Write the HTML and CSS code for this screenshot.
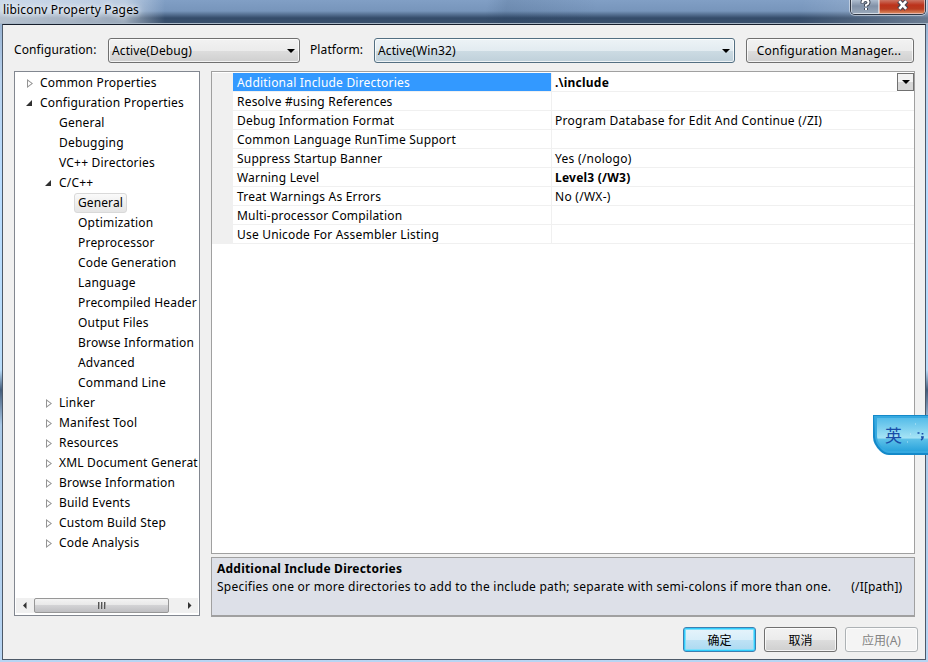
FILE: index.html
```html
<!DOCTYPE html>
<html lang="en">
<head>
    <meta charset="utf-8">
    <title>libiconv Property Pages</title>
    <link rel="stylesheet" href="styles.css">
</head>
<body>
    <div class="window">
        <div class="titlebar">
            <span class="title">libiconv Property Pages</span>
            <div class="caption">
                <span class="cap help"><svg width="28" height="14" viewBox="0 0 28 14"><path d="M11.5 3.5V2.5Q11.5 0 14.5 0Q17.5 0 17.5 2.5Q17.5 4 15 5.200V6.5M15 8V10" fill="none" stroke="#444b58" stroke-width="4"/><path d="M11.5 3V2.5Q11.5 0 14.5 0Q17.5 0 17.5 2.5Q17.5 4 15 5.200V6.5M15 8V10" fill="none" stroke="#fff" stroke-width="2"/></svg></span>
                <span class="cap close"><svg width="48" height="14" viewBox="0 0 48 14"><path d="M20 1L27.5 9M27.5 1L20 9" fill="none" stroke="#4b4450" stroke-width="5"/><path d="M20.3 1.2L27.2 8.8M27.2 1.2L20.3 8.8" fill="none" stroke="#fff" stroke-width="2.6"/></svg></span>
            </div>
        </div>
        <div class="client">
            <div class="toolbar">
                <span class="label">Configuration:</span>
                <div class="combo config"><span>Active(Debug)</span><i class="arrow"></i></div>
                <span class="label platform-label">Platform:</span>
                <div class="combo platform"><span>Active(Win32)</span><i class="arrow"></i></div>
                <div class="button manager">Configuration Manager...</div>
            </div>
            <div class="main">
                <div class="tree">
                    <ul class="nodes">
                        <li class="l1 closed">Common Properties</li>
                        <li class="l1 open">Configuration Properties</li>
                        <li class="l2">General</li>
                        <li class="l2">Debugging</li>
                        <li class="l2">VC++ Directories</li>
                        <li class="l2 open">C/C++</li>
                        <li class="l3"><span class="current">General</span></li>
                        <li class="l3">Optimization</li>
                        <li class="l3">Preprocessor</li>
                        <li class="l3">Code Generation</li>
                        <li class="l3">Language</li>
                        <li class="l3">Precompiled Header</li>
                        <li class="l3">Output Files</li>
                        <li class="l3">Browse Information</li>
                        <li class="l3">Advanced</li>
                        <li class="l3">Command Line</li>
                        <li class="l2 closed">Linker</li>
                        <li class="l2 closed">Manifest Tool</li>
                        <li class="l2 closed">Resources</li>
                        <li class="l2 closed">XML Document Generat</li>
                        <li class="l2 closed">Browse Information</li>
                        <li class="l2 closed">Build Events</li>
                        <li class="l2 closed">Custom Build Step</li>
                        <li class="l2 closed">Code Analysis</li>
                    </ul>
                    <div class="scrollbar">
                        <svg width="17" height="15"><path d="M9.5 4v7L6 7.5z" fill="#333"/></svg>
                        <div class="thumb"><i></i><i></i><i></i></div>
                        <svg width="17" height="15"><path d="M7 4v7l3.500-3.500z" fill="#333"/></svg>
                    </div>
                </div>
                <div class="props">
                    <div class="grid">
                        <div class="row selected"><span class="name">Additional Include Directories</span><span class="value bold">.\include</span><span class="drop"><i class="arrow"></i></span></div>
                        <div class="row"><span class="name">Resolve #using References</span><span class="value"></span></div>
                        <div class="row"><span class="name">Debug Information Format</span><span class="value">Program Database for Edit And Continue (/ZI)</span></div>
                        <div class="row"><span class="name">Common Language RunTime Support</span><span class="value"></span></div>
                        <div class="row"><span class="name">Suppress Startup Banner</span><span class="value">Yes (/nologo)</span></div>
                        <div class="row"><span class="name">Warning Level</span><span class="value bold">Level3 (/W3)</span></div>
                        <div class="row"><span class="name">Treat Warnings As Errors</span><span class="value">No (/WX-)</span></div>
                        <div class="row"><span class="name">Multi-processor Compilation</span><span class="value"></span></div>
                        <div class="row"><span class="name">Use Unicode For Assembler Listing</span><span class="value"></span></div>
                    </div>
                    <div class="help-box">
                        <div class="help-title">Additional Include Directories</div>
                        <div class="help-text"><span>Specifies one or more directories to add to the include path; separate with semi-colons if more than one.</span><span class="switch">(/I[path])</span></div>
                    </div>
                </div>
            </div>
            <div class="footer">
                <div class="button default">确定</div>
                <div class="button">取消</div>
                <div class="button disabled">应用(A)</div>
            </div>
        </div>
        <div class="ime">
            <svg class="ime-bg" width="55" height="40" viewBox="0 0 55 40">
                <defs>
                    <linearGradient id="sky" x1="0" y1="0" x2="0" y2="1">
                        <stop offset="0" stop-color="#55bce9"/>
                        <stop offset=".6" stop-color="#a5e3f5"/>
                        <stop offset=".65" stop-color="#5cc0e8"/>
                        <stop offset="1" stop-color="#2aa3dc"/>
                    </linearGradient>
                </defs>
                <path d="M0 0H55V40H16Q11 40 7 36Q0 29 0 22Z" fill="#1489c9"/>
                <path d="M1 1H55V38H16Q12 38 8 34Q2 28 2 21Z" fill="#35a9e0"/>
                <path d="M4 3H55V36H17Q13 36 9.500 32.500Q4 27 4 21Z" fill="url(#sky)"/>
                <path d="M42 9h1M34 27h1M37 19h1" stroke="#e5faff" stroke-opacity=".7"/>
                <path d="M44.500 18h2M49.500 18v1.500M48 22h2q0 2-2 3" fill="none" stroke="#1a4da8" stroke-width="1.700"/>
            </svg>
            <span class="ime-text">英</span>
        </div>
    </div>
</body>
</html>
```

FILE: styles.css
```css
* {
    box-sizing: border-box;
}
body {
    margin: 0;
    overflow: hidden;
    font: 12px "Noto Sans", "Noto Sans CJK SC", sans-serif;
    letter-spacing: 0.2px;
    color: #000;
}
.window {
    position: relative;
    display: flex;
    flex-direction: column;
    width: 928px;
    height: 662px;
    padding: 0 2px 2px;
    background: linear-gradient(#8ba6c6 0, #b8d2ee 80px, #b8dcff 180px, #b8dcfa 370px, #445d7b 390px, #a9c9e8 425px, #b8d5f3);
}
.titlebar {
    display: flex;
    justify-content: space-between;
    height: 24px;
    flex: none;
    margin: 0 -2px;
    border-bottom: 1px solid #a9b8c7;
    background:
        linear-gradient(90deg, rgba(235, 242, 249, 0.7), rgba(235, 242, 249, 0.55) 125px, rgba(235, 242, 249, 0) 165px),
        linear-gradient(100deg, transparent 480px, rgba(25, 50, 80, 0.12) 500px, transparent 590px, transparent 790px, rgba(255, 255, 255, 0.25) 100%),
        linear-gradient(#819fc5, #7795bb 11px, #344c6a 18px, #3a506d);
}
.title {
    padding-left: 3px;
    line-height: 19px;
    letter-spacing: 0.17px;
    text-shadow: 0 0 5px #fff, 0 0 8px #fff;
}
.caption {
    display: flex;
    height: 15px;
    margin-right: 2px;
    border: 1px solid #303744;
    border-top: 0;
    border-radius: 0 0 5px 5px;
    box-shadow: 0 0 0 1px rgba(255, 255, 255, 0.45);
    overflow: hidden;
}
.cap {
    display: block;
    height: 14px;
    border: 1px solid rgba(255, 255, 255, 0.5);
    border-top: 0;
}
.cap svg {
    display: block;
    margin-left: -1px;
}
.help {
    width: 28px;
    background: linear-gradient(#aebdcf, #8191a7 6px, #98a7b9);
}
.close {
    width: 46px;
    background: linear-gradient(#cb7464, #bc321b 5px, #b93b20 9px, #d88559);
}
.client {
    display: flex;
    flex-direction: column;
    flex: 1;
    min-height: 0;
    padding: 13px 10px 7px 11px;
    border: 1px solid #4d5968;
    border-top-color: #161e2c;
    background: #f0f0f0;
}
.toolbar {
    display: flex;
    height: 25px;
    flex: none;
    letter-spacing: 0.1px;
}
.label {
    width: 94px;
    line-height: 23px;
}
.platform-label {
    width: 64px;
    margin-left: 10px;
}
.combo {
    display: flex;
    align-items: center;
    justify-content: space-between;
    height: 25px;
    padding: 0 4px 0 3px;
    border: 1px solid #707070;
    border-radius: 3px;
    background: linear-gradient(#f2f2f2, #ebebeb 12px, #dddddd 12px, #cfcfcf);
    box-shadow: inset 0 0 0 1px rgba(255, 255, 255, 0.75);
}
.config {
    width: 192px;
}
.platform {
    width: 361px;
    border-color: #536f82;
    background: linear-gradient(#edf3f6, #e2ebf0 12px, #ccdbe3 12px, #bfd0da);
}
.arrow {
    border: 4px solid transparent;
    border-top-color: #000;
    border-bottom: 0;
}
.button {
    display: flex;
    align-items: center;
    justify-content: center;
    width: 73px;
    height: 25px;
    border: 1px solid #707070;
    border-radius: 3px;
    background: linear-gradient(#f2f2f2, #ebebeb 12px, #dddddd 12px, #cfcfcf);
    box-shadow: inset 0 0 0 1px rgba(255, 255, 255, 0.75);
}
.manager {
    width: 168px;
    margin-left: 11px;
    padding-right: 2px;
    letter-spacing: 0.2px;
}
.main {
    display: flex;
    gap: 11px;
    height: 546px;
    margin-top: 8px;
}
.tree {
    display: flex;
    flex-direction: column;
    justify-content: space-between;
    width: 186px;
    height: 545px;
    padding: 1px;
    border: 1px solid #828790;
    background: #fff;
}
.nodes {
    margin: 0;
    padding: 0;
    list-style: none;
}
.nodes li {
    position: relative;
    height: 20px;
    line-height: 20px;
    white-space: nowrap;
}
.l1 {
    padding-left: 24px;
}
.l2 {
    padding-left: 43px;
}
.l3 {
    padding-left: 62px;
}
.closed::before,
.open::before {
    content: "";
    position: absolute;
    top: 6px;
    width: 6px;
    height: 9px;
    margin-left: -13px;
    background: #949494;
    clip-path: polygon(evenodd, 0 0, 6px 4.5px, 0 9px, 0 0, 1px 2px, 1px 7px, 4.5px 4.5px, 1px 2px);
}
.open::before {
    top: 7px;
    height: 6px;
    margin-left: -14px;
    background: #303030;
    clip-path: polygon(100% 0, 100% 100%, 0 100%);
}
.current {
    display: inline-block;
    height: 20px;
    margin-left: -4px;
    padding: 0 3px;
    line-height: 18px;
    letter-spacing: 0.1px;
    border: 1px solid #d9d9d9;
    border-radius: 3px;
    background: linear-gradient(#fafafa, #e5e5e5);
}
.scrollbar {
    display: flex;
    height: 15px;
    margin-bottom: 1px;
    padding: 0 1px;
    background: #f0f0f0;
}
.scrollbar svg {
    flex: none;
}
.thumb {
    display: flex;
    flex: none;
    align-items: center;
    justify-content: center;
    gap: 1px;
    width: 135px;
    margin-right: 12px;
    border: 1px solid #979797;
    border-radius: 2px;
    background: linear-gradient(#f3f3f3, #e8e8e8 6px, #d4d4d6 6px, #bfbfc2);
}
.thumb i {
    width: 2px;
    height: 7px;
    border-left: 1px solid #555;
    border-right: 1px solid #aaa;
}
.props {
    display: flex;
    flex-direction: column;
    justify-content: space-between;
    width: 704px;
}
.grid {
    height: 483px;
    padding-top: 1px;
    border: 1px solid #a0a0a0;
    background: #fff;
}
.row {
    display: flex;
    height: 19px;
    padding-left: 21px;
    line-height: 20px;
    background: linear-gradient(#f0f0f0, #f0f0f0) 0 0 / 21px 19px no-repeat;
}
.name,
.value {
    height: 19px;
    padding-left: 4px;
    border-bottom: 1px solid #f0f0f0;
    white-space: pre;
}
.name {
    width: 319px;
    border-right: 1px solid #f0f0f0;
}
.value {
    flex: 1;
    padding-left: 3px;
    letter-spacing: 0.27px;
}
.selected .name {
    background: #3399ff;
    background-clip: padding-box;
    color: #fff;
}
.bold,
.help-title {
    font-weight: 700;
    letter-spacing: 0.22px;
}
.drop {
    display: flex;
    align-items: center;
    justify-content: center;
    width: 17px;
    height: 18px;
    border: 1px solid #707070;
    background: linear-gradient(#f2f2f2 50%, #d7d7d7 50%);
}
.help-box {
    height: 60px;
    padding: 2px 5px;
    border: 1px solid #a0a0a0;
    border-bottom-width: 2px;
    background: #dde0e8;
}
.help-title,
.help-text {
    height: 18px;
    line-height: 18px;
    white-space: nowrap;
}
.help-text {
    letter-spacing: 0.255px;
}
.switch {
    margin-left: 20px;
    letter-spacing: 0.15px;
}
.footer {
    display: flex;
    justify-content: flex-end;
    gap: 8px;
    margin: 10px -3px 0 0;
    letter-spacing: 0;
}
.default {
    border-color: #3c7fb1;
    background: linear-gradient(#e6f4fb, #d7eef9 12px, #bee2f5 12px, #abd9f1);
    box-shadow: inset 0 0 0 1px #30cdfc, inset 0 0 0 2px #7fdffb;
}
.disabled {
    border-color: #adb2b5;
    background: #f4f4f4;
    color: #838383;
}
.ime {
    position: absolute;
    top: 415px;
    right: 0;
    width: 55px;
    height: 40px;
}
.ime-bg {
    display: block;
}
.ime-text {
    position: absolute;
    top: 7px;
    left: 12px;
    font: 17px/26px "Noto Sans CJK SC", sans-serif;
    color: #174ca8;
}
```
